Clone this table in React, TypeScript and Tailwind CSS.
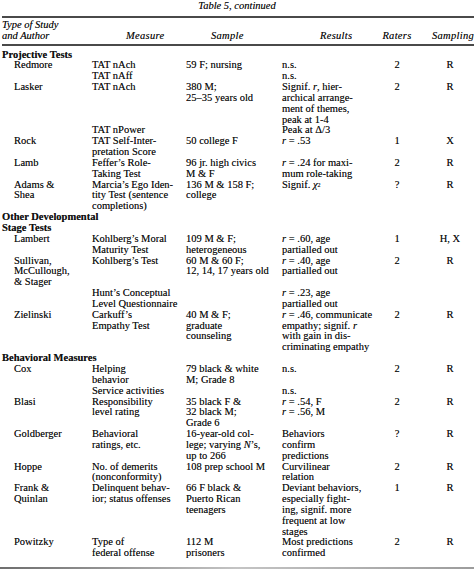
import type { ReactNode } from "react";

type Row =
  | { section: string[] }
  | {
      author: string[];
      measure: ReactNode[];
      sample: ReactNode[];
      results: ReactNode[];
      raters: string;
      sampling: string;
    };

const r = <i>r</i>;

const rows: Row[] = [
  { section: ["Projective Tests"] },
  {
    author: ["Redmore"],
    measure: ["TAT nAch", "TAT nAff"],
    sample: ["59 F; nursing"],
    results: ["n.s.", "n.s."],
    raters: "2",
    sampling: "R",
  },
  {
    author: ["Lasker"],
    measure: ["TAT nAch", "", "", "", "TAT nPower"],
    sample: ["380 M;", "25–35 years old"],
    results: [
      <>Signif. {r}, hier-</>,
      "archical arrange-",
      "ment of themes,",
      "peak at 1-4",
      "Peak at Δ/3",
    ],
    raters: "2",
    sampling: "R",
  },
  {
    author: ["Rock"],
    measure: ["TAT Self-Inter-", "pretation Score"],
    sample: ["50 college F"],
    results: [<>{r} = .53</>],
    raters: "1",
    sampling: "X",
  },
  {
    author: ["Lamb"],
    measure: ["Feffer’s Role-", "Taking Test"],
    sample: ["96 jr. high civics", "M & F"],
    results: [<>{r} = .24 for maxi-</>, "mum role-taking"],
    raters: "2",
    sampling: "R",
  },
  {
    author: ["Adams &", "Shea"],
    measure: ["Marcia’s Ego Iden-", "tity Test (sentence", "completions)"],
    sample: ["136 M & 158 F;", "college"],
    results: [
      <>
        Signif. <i>χ</i>
        <sup className="text-[6px] relative -top-[1px]">2</sup>
      </>,
    ],
    raters: "?",
    sampling: "R",
  },
  { section: ["Other Developmental", "Stage Tests"] },
  {
    author: ["Lambert"],
    measure: ["Kohlberg’s Moral", "Maturity Test"],
    sample: ["109 M & F;", "heterogeneous"],
    results: [<>{r} = .60, age</>, "partialled out"],
    raters: "1",
    sampling: "H, X",
  },
  {
    author: ["Sullivan,", "McCullough,", "& Stager"],
    measure: ["Kohlberg’s Test", "", "", "Hunt’s Conceptual", "Level Questionnaire"],
    sample: ["60 M & 60 F;", "12, 14, 17 years old"],
    results: [
      <>{r} = .40, age</>,
      "partialled out",
      "",
      <>{r} = .23, age</>,
      "partialled out",
    ],
    raters: "2",
    sampling: "R",
  },
  {
    author: ["Zielinski"],
    measure: ["Carkuff’s", "Empathy Test"],
    sample: ["40 M & F;", "graduate", "counseling"],
    results: [
      <>{r} = .46, communicate</>,
      <>empathy; signif. {r}</>,
      "with gain in dis-",
      "criminating empathy",
    ],
    raters: "2",
    sampling: "R",
  },
  { section: ["Behavioral Measures"] },
  {
    author: ["Cox"],
    measure: ["Helping", "behavior", "Service activities"],
    sample: ["79 black & white", "M; Grade 8"],
    results: ["n.s.", "", "n.s."],
    raters: "2",
    sampling: "R",
  },
  {
    author: ["Blasi"],
    measure: ["Responsibility", "level rating"],
    sample: ["35 black F &", "32 black M;", "Grade 6"],
    results: [<>{r} = .54, F</>, <>{r} = .56, M</>],
    raters: "2",
    sampling: "R",
  },
  {
    author: ["Goldberger"],
    measure: ["Behavioral", "ratings, etc."],
    sample: ["16-year-old col-", <>lege; varying <i>N</i>’s,</>, "up to 266"],
    results: ["Behaviors", "confirm", "predictions"],
    raters: "?",
    sampling: "R",
  },
  {
    author: ["Hoppe"],
    measure: ["No. of demerits", "(nonconformity)"],
    sample: ["108 prep school M"],
    results: ["Curvilinear", "relation"],
    raters: "2",
    sampling: "R",
  },
  {
    author: ["Frank &", "Quinlan"],
    measure: ["Delinquent behav-", "ior; status offenses"],
    sample: ["66 F black &", "Puerto Rican", "teenagers"],
    results: [
      "Deviant behaviors,",
      "especially fight-",
      "ing, signif. more",
      "frequent at low",
      "stages",
    ],
    raters: "1",
    sampling: "R",
  },
  {
    author: ["Powitzky"],
    measure: ["Type of", "federal offense"],
    sample: ["112 M", "prisoners"],
    results: ["Most predictions", "confirmed"],
    raters: "2",
    sampling: "R",
  },
];

const cols = "grid grid-cols-[90px_94px_96px_98px_34px_60px]";

function Lines({ items }: { items: ReactNode[] }) {
  return (
    <div>
      {items.map((item, i) => (
        <div key={i} className="h-[10.85px] whitespace-nowrap">
          {item === "" ? "\u00a0" : item}
        </div>
      ))}
    </div>
  );
}

export default function App() {
  return (
    <div
      className="w-[474px] h-[572px] overflow-hidden bg-white text-[#111] text-[10.5px] leading-[10.85px] [text-shadow:0_0_0.5px_rgba(0,0,0,0.55)]"
      style={{ fontFamily: '"Liberation Serif", "Times New Roman", serif' }}
    >
      <div className="h-[11px] leading-[11px] text-center italic">Table 5, continued</div>
      <div className="mt-[5px] ml-[2px] h-[1.5px] bg-[#4a4a4a]" />

      <div className={`${cols} pt-[1px] pl-[2px] italic leading-[11.5px]`}>
        <div className="whitespace-nowrap">
          <div>Type of Study</div>
          <div>and Author</div>
        </div>
        <div className="pt-[11.5px] pl-[34px] tracking-[0.3px]">Measure</div>
        <div className="pt-[11.5px] pl-[25px] tracking-[0.3px]">Sample</div>
        <div className="pt-[11.5px] pl-[38px] tracking-[0.3px]">Results</div>
        <div className="pt-[11.5px] text-center tracking-[0.3px]">Raters</div>
        <div className="pt-[11.5px] pl-[18px] tracking-[0.3px] whitespace-nowrap">Sampling</div>
      </div>
      <div className="mt-[2.5px] ml-[2px] h-[1.5px] bg-[#4a4a4a]" />

      <div className="mt-[4px] pl-[2px]">
        {rows.map((row, i) =>
          "section" in row ? (
            <div key={i} className="font-bold">
              <Lines items={row.section} />
            </div>
          ) : (
            <div key={i} className={cols}>
              <div className="pl-[12px]">
                <Lines items={row.author} />
              </div>
              <Lines items={row.measure} />
              <Lines items={row.sample} />
              <Lines items={row.results} />
              <div className="text-center">{row.raters}</div>
              <div className="pl-[12px] text-center">{row.sampling}</div>
            </div>
          )
        )}
      </div>

      <div className="mt-[8px] h-[2px] bg-gradient-to-r from-[#6e6e6e] via-[#c4c4c4] to-[#9c9c9c]" />
    </div>
  );
}
